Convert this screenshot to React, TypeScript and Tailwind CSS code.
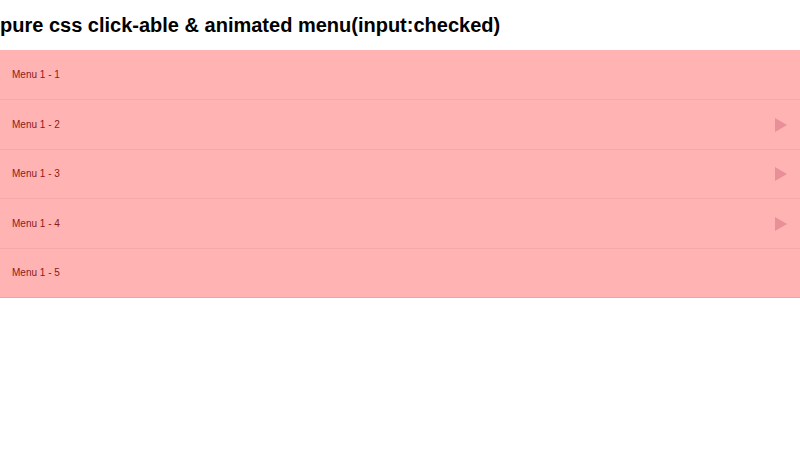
import React from "react";

const items = [
  { label: "Menu 1 - 1", arrow: false },
  { label: "Menu 1 - 2", arrow: true },
  { label: "Menu 1 - 3", arrow: true },
  { label: "Menu 1 - 4", arrow: true },
  { label: "Menu 1 - 5", arrow: false },
];

export default function App() {
  return (
    <div className="w-[800px] h-[450px] bg-white" style={{ fontFamily: '"Liberation Sans", Arial, sans-serif' }}>
      <h1 className="h-[50px] flex items-center text-[20px] font-bold text-black pb-[1px]">
        pure css click-able &amp; animated menu(input:checked)
      </h1>
      <ul className="bg-[#ffb3b3] border-b border-[#f0a3a3]">
        {items.map((it, i) => (
          <li
            key={i}
            className={`h-[49.4px] flex items-center justify-between pl-[12px] pr-[13px] ${i > 0 ? "border-t border-[#f7a9a9]" : ""}`}
          >
            <span className="text-[10px] text-[#8b1a1a]">{it.label}</span>
            {it.arrow && (
              <svg width="12" height="14" viewBox="0 0 12 14" className="mt-[1px]">
                <polygon points="0,0 12,7 0,14" fill="#e88f97" />
              </svg>
            )}
          </li>
        ))}
      </ul>
    </div>
  );
}
